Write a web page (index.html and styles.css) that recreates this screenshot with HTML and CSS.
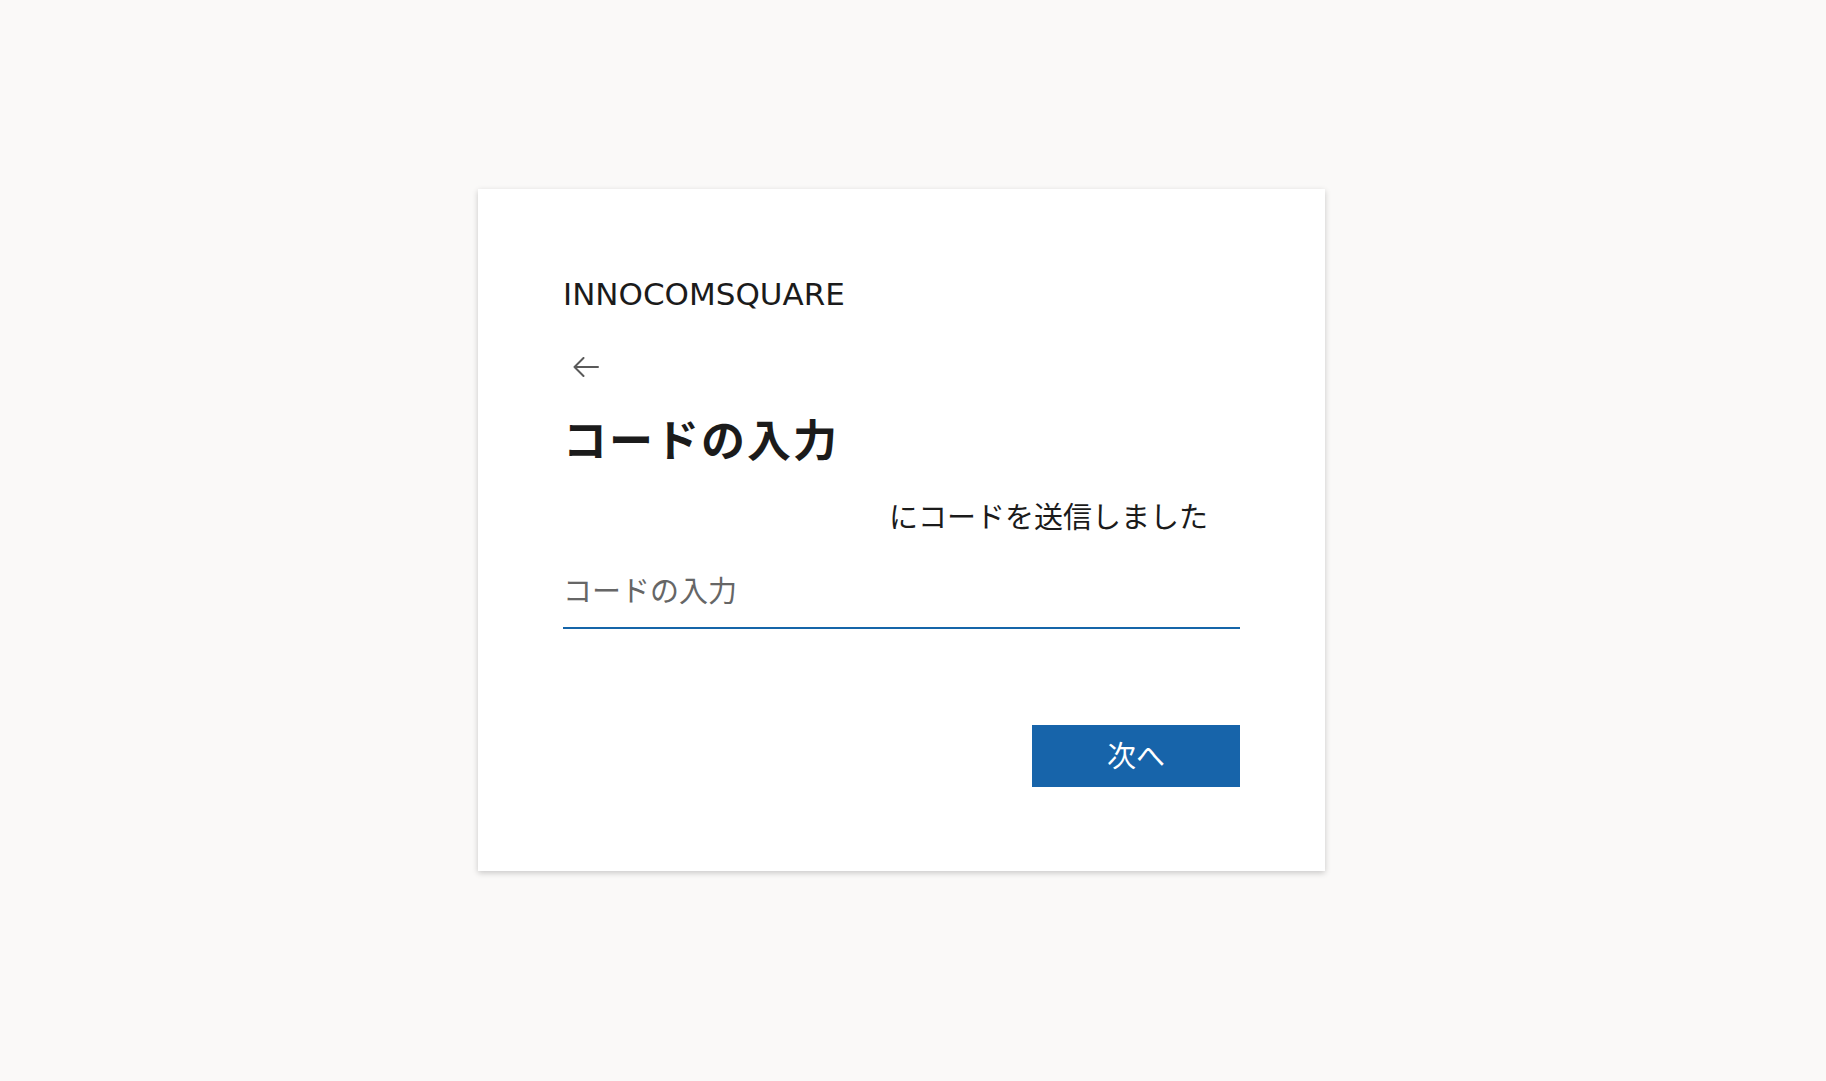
FILE: index.html
```html
<!DOCTYPE html>
<html lang="ja">
<head>
<meta charset="utf-8">
<title>コードの入力</title>
<link rel="stylesheet" href="styles.css">
</head>
<body>
<main class="card">
  <div class="logo">INNOCOMSQUARE</div>
  <button class="back" type="button" aria-label="戻る">
    <svg width="26" height="20" viewBox="0 0 26 20"><path d="M25 10H1.5M10.5 1L1.5 10L10.5 19" fill="none" stroke="#5a5a5a" stroke-width="2" stroke-linecap="round" stroke-linejoin="round"/></svg>
  </button>
  <h1 class="title">コードの入力</h1>
  <p class="sub"><span class="email"></span>にコードを送信しました</p>
  <input class="code" type="text" placeholder="コードの入力">
  <div class="actions">
    <button class="next" type="button">次へ</button>
  </div>
</main>
</body>
</html>
```
FILE: styles.css
```css
html, body {
  margin: 0;
  padding: 0;
}
body {
  background: #faf9f8;
  padding-top: 189px;
  padding-left: 478px;
  min-height: 1081px;
  box-sizing: border-box;
  font-family: "Noto Sans CJK JP", "DejaVu Sans", sans-serif;
  color: #1b1b1b;
}
.card {
  width: 847px;
  box-sizing: border-box;
  background: #fff;
  padding: 87px 85px 84px 85px;
  box-shadow: 0 2px 6px rgba(0, 0, 0, 0.2);
  display: flex;
  flex-direction: column;
}
.logo {
  font-family: "DejaVu Sans", sans-serif;
  font-size: 31px;
  line-height: 36px;
  height: 36px;
  color: #1b1b1b;
}
.back {
  margin: 45px 0 0 10px;
  padding: 0;
  border: 0;
  background: none;
  width: 26px;
  height: 20px;
  display: block;
}
.back svg { display: block; }
.title {
  margin: 31px 0 0 0;
  font-size: 44px;
  letter-spacing: 2px;
  line-height: 60px;
  font-weight: 700;
  color: #1b1b1b;
}
.sub {
  margin: 27px 0 0 0;
  font-size: 29px;
  line-height: 40px;
  color: #1b1b1b;
}
.email {
  display: inline-block;
  width: 326px;
}
.code {
  margin: 26px 0 0 0;
  height: 56px;
  padding: 0 0 10px 0;
  border: 0;
  border-bottom: 2px solid #1565a9;
  outline: none;
  font-family: "Noto Sans CJK JP", sans-serif;
  font-size: 29px;
  color: #1b1b1b;
  background: transparent;
  box-sizing: content-box;
  width: 677px;
}
.code::placeholder {
  color: #666;
}
.actions {
  margin-top: 96px;
  display: flex;
  justify-content: flex-end;
}
.next {
  width: 208px;
  height: 62px;
  border: 0;
  background: #1764aa;
  color: #fff;
  font-family: "Noto Sans CJK JP", sans-serif;
  font-size: 29px;
  line-height: 58px;
  padding: 0 0 4px 0;
}
```
